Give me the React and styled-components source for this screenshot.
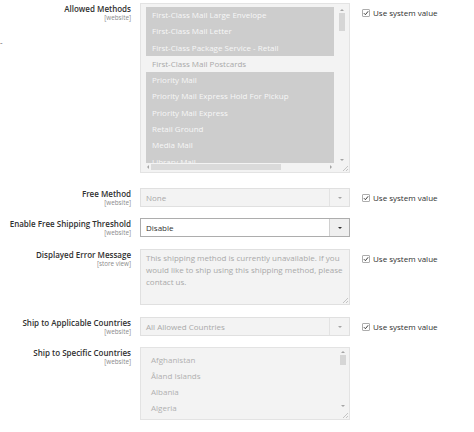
import React from "react";
import styled, { createGlobalStyle, css } from "styled-components";

const GlobalStyle = createGlobalStyle`
  body {
    margin: 0;
    background: #fff;
    font-family: "Open Sans", "Liberation Sans", sans-serif;
    color: #303030;
  }
`;

const methods = [
  { name: "First-Class Mail Large Envelope", on: true },
  { name: "First-Class Mail Letter", on: true },
  { name: "First-Class Package Service - Retail", on: true },
  { name: "First-Class Mail Postcards", on: false },
  { name: "Priority Mail", on: true },
  { name: "Priority Mail Express Hold For Pickup", on: true },
  { name: "Priority Mail Express", on: true },
  { name: "Retail Ground", on: true },
  { name: "Media Mail", on: true },
  { name: "Library Mail", on: true },
];

const countries = ["Afghanistan", "Åland Islands", "Albania", "Algeria"];

const App = () => {
  return (
    <Page>
      <GlobalStyle />
      <Stray>-</Stray>

      <Row $mb={15}>
        <Label title="Allowed Methods" scope="[website]" />
        <ListBox>
          <Options>
            {methods.map((m) => (
              <Option key={m.name} $on={m.on}>
                {m.name}
              </Option>
            ))}
          </Options>
          <VScroll>
            <Arrow $dir="up" />
            <Thumb $h={18} />
            <Spacer />
            <Arrow $dir="down" />
          </VScroll>
          <HScroll>
            <Arrow $dir="left" />
            <HThumb />
            <Spacer />
            <Arrow $dir="right" />
          </HScroll>
          <Grip />
        </ListBox>
        <SystemValue />
      </Row>

      <Row $mb={11}>
        <Label title="Free Method" scope="[website]" />
        <Select>
          <SelectText>None</SelectText>
          <Caret>
            <Arrow $dir="down" />
          </Caret>
        </Select>
        <SystemValue />
      </Row>

      <Row $mb={12}>
        <Label title="Enable Free Shipping Threshold" scope="[website]" />
        <Select $active>
          <SelectText $active>Disable</SelectText>
          <Caret $active>
            <Arrow $dir="down" $dark />
          </Caret>
        </Select>
      </Row>

      <Row $mb={12}>
        <Label title="Displayed Error Message" scope="[store view]" />
        <TextArea>
          This shipping method is currently unavailable. If you
          <br />
          would like to ship using this shipping method, please
          <br />
          contact us.
          <Grip $corner />
        </TextArea>
        <SystemValue />
      </Row>

      <Row $mb={11}>
        <Label title="Ship to Applicable Countries" scope="[website]" />
        <Select>
          <SelectText>All Allowed Countries</SelectText>
          <Caret>
            <Arrow $dir="down" />
          </Caret>
        </Select>
        <SystemValue />
      </Row>

      <Row $mb={0}>
        <Label title="Ship to Specific Countries" scope="[website]" />
        <CountryBox>
          <CountryList>
            {countries.map((c) => (
              <Country key={c}>{c}</Country>
            ))}
          </CountryList>
          <VScroll $plain>
            <Arrow $dir="up" />
            <Thumb $h={10} />
            <Spacer />
            <Arrow $dir="down" />
            <Grip $inline />
          </VScroll>
        </CountryBox>
      </Row>
    </Page>
  );
};

const Label = ({ title, scope }) => (
  <LabelCol>
    <LabelText>{title}</LabelText>
    <Scope>{scope}</Scope>
  </LabelCol>
);

const SystemValue = () => (
  <Check>
    <Box>
      <svg width="7" height="6" viewBox="0 0 7 6">
        <polyline
          points="1,3.2 2.8,5 6,1"
          fill="none"
          stroke="#333"
          strokeWidth="1.1"
        />
      </svg>
    </Box>
    Use system value
  </Check>
);

export default App;

const Page = styled.div`
  position: relative;
  padding-top: 3px;
  width: 474px;
`;

const Stray = styled.span`
  position: absolute;
  left: 0;
  top: 36px;
  font-size: 8px;
  color: #555;
`;

const Row = styled.div`
  display: flex;
  align-items: flex-start;
  margin-bottom: ${(p) => p.$mb}px;
`;

const LabelCol = styled.div`
  width: 131px;
  margin-right: 9px;
  text-align: right;
  padding-top: 1px;
`;

const LabelText = styled.div`
  font-size: 8px;
  font-weight: 600;
  line-height: 10px;
  color: #303030;
  white-space: nowrap;
`;

const Scope = styled.div`
  font-size: 6.3px;
  line-height: 8px;
  color: #8a8a8a;
`;

const ListBox = styled.div`
  box-sizing: border-box;
  width: 210px;
  height: 170px;
  border: 1px solid #e3e3e3;
  background: #f3f3f3;
  padding: 3px 1px 1px 5px;
  display: grid;
  grid-template-columns: 188px 1fr;
  grid-template-rows: 156px 1fr;
`;

const Options = styled.div`
  overflow: hidden;
`;

const Option = styled.div`
  height: 16.3px;
  line-height: 16.3px;
  font-size: 8px;
  padding-left: 6px;
  white-space: nowrap;
  overflow: hidden;
  background: ${(p) => (p.$on ? "#cdcdcd" : "#f3f3f3")};
  color: ${(p) => (p.$on ? "#f7f7f7" : "#a9a9a9")};
`;

const VScroll = styled.div`
  display: flex;
  flex-direction: column;
  align-items: center;
  padding: 2px 0 2px 2px;
  ${(p) =>
    p.$plain &&
    css`
      width: 10px;
      padding: 3px 0 1px;
    `}
`;

const Spacer = styled.div`
  flex: 1;
`;

const Thumb = styled.div`
  width: 6px;
  height: ${(p) => p.$h}px;
  margin-top: 2px;
  background: #d6d6d6;
`;

const HScroll = styled.div`
  display: flex;
  align-items: center;
  padding: 0 2px 0 1px;
`;

const HThumb = styled.div`
  width: 130px;
  height: 6px;
  margin-left: 2px;
  background: #dadada;
`;

const arrows = {
  up: css`
    border-left: 2px solid transparent;
    border-right: 2px solid transparent;
    border-bottom: 2px solid currentColor;
  `,
  down: css`
    border-left: 2px solid transparent;
    border-right: 2px solid transparent;
    border-top: 2px solid currentColor;
  `,
  left: css`
    border-top: 2px solid transparent;
    border-bottom: 2px solid transparent;
    border-right: 2px solid currentColor;
  `,
  right: css`
    border-top: 2px solid transparent;
    border-bottom: 2px solid transparent;
    border-left: 2px solid currentColor;
  `,
};

const Arrow = styled.span`
  display: block;
  width: 0;
  height: 0;
  color: ${(p) => (p.$dark ? "#303030" : "#a5a5a5")};
  ${(p) => arrows[p.$dir]}
`;

const Grip = styled.div`
  width: 5px;
  height: 5px;
  align-self: end;
  justify-self: end;
  background: linear-gradient(
    135deg,
    transparent 45%,
    #c4c4c4 45%,
    #c4c4c4 55%,
    transparent 55%,
    transparent 75%,
    #c4c4c4 75%,
    #c4c4c4 85%,
    transparent 85%
  );
  ${(p) =>
    p.$corner &&
    css`
      position: absolute;
      right: 1px;
      bottom: 1px;
    `}
  ${(p) =>
    p.$inline &&
    css`
      margin-top: 6px;
      align-self: flex-end;
    `}
`;

const Select = styled.div`
  box-sizing: border-box;
  width: 210px;
  height: 19px;
  display: flex;
  align-items: stretch;
  border: 1px solid ${(p) => (p.$active ? "#adadad" : "#e0e0e0")};
  background: ${(p) => (p.$active ? "#fff" : "#f3f3f3")};
`;

const SelectText = styled.div`
  flex: 1;
  padding-left: 5px;
  font-size: 8px;
  line-height: 17px;
  color: ${(p) => (p.$active ? "#303030" : "#a9a9a9")};
`;

const Caret = styled.div`
  width: 19px;
  display: flex;
  align-items: center;
  justify-content: center;
  border-left: 1px solid ${(p) => (p.$active ? "#d0d0d0" : "#e3e3e3")};
  background: ${(p) => (p.$active ? "#efefef" : "#f3f3f3")};
`;

const TextArea = styled.div`
  position: relative;
  box-sizing: border-box;
  width: 210px;
  height: 56px;
  border: 1px solid #e0e0e0;
  background: #f3f3f3;
  padding: 2px 5px;
  font-size: 8px;
  line-height: 12px;
  color: #a9a9a9;
  white-space: nowrap;
`;

const CountryBox = styled.div`
  box-sizing: border-box;
  width: 210px;
  height: 73px;
  border: 1px solid #e3e3e3;
  background: #f3f3f3;
  display: flex;
  padding-right: 1px;
`;

const CountryList = styled.div`
  flex: 1;
  padding: 4px 0 0 10px;
`;

const Country = styled.div`
  height: 16px;
  line-height: 16px;
  font-size: 8px;
  color: #b0b0b0;
`;

const Check = styled.label`
  display: flex;
  align-items: center;
  gap: 3px;
  margin-left: 12px;
  padding-top: 5px;
  font-size: 8px;
  line-height: 10px;
  color: #303030;
  white-space: nowrap;
`;

const Box = styled.span`
  box-sizing: border-box;
  width: 8px;
  height: 8px;
  display: flex;
  align-items: center;
  justify-content: center;
  border: 1px solid #adadad;
  border-radius: 1px;
  background: #fff;
`;
